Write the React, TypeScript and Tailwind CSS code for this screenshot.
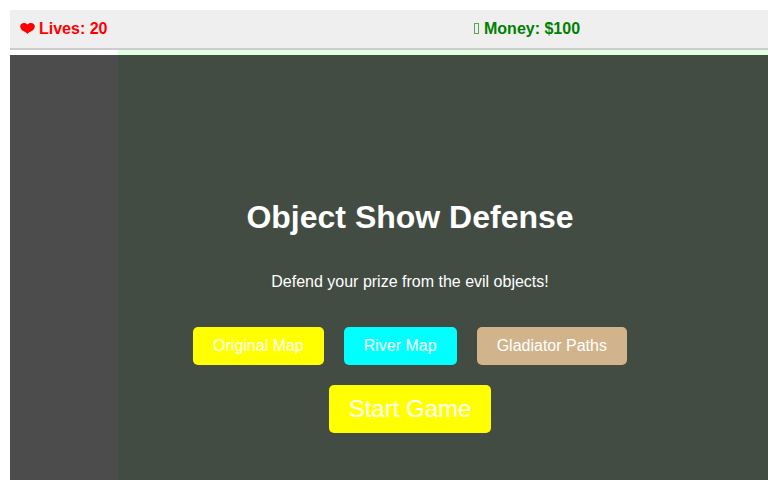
const FONT = 'font-["Liberation_Sans",Arial,sans-serif]';

type MapOption = { id: string; label: string; color: string };

const maps: MapOption[] = [
  { id: "original", label: "Original Map", color: "bg-[#ffff00]" },
  { id: "river", label: "River Map", color: "bg-[#00ffff]" },
  { id: "gladiator", label: "Gladiator Paths", color: "bg-[#d2b48c]" },
];

function HeartIcon() {
  return (
    <svg width="15" height="12" viewBox="0 0 15 12" fill="currentColor" aria-hidden="true">
      <path d="M7.5 1.6C8.200 0.600 9.500 0 11 0c2.300 0 3.800 1.400 3.800 3.400 0 2.100-1.400 3.700-3.600 4.900C9.500 9.200 8.300 9.900 7.500 11 6.700 9.900 5.500 9.200 3.800 8.300 1.600 7.100 0.200 5.500 0.200 3.400 0.200 1.400 1.700 0 4 0c1.500 0 2.800 0.600 3.500 1.600Z" />
    </svg>
  );
}

function CoinIcon() {
  return (
    <svg width="6" height="12" viewBox="0 0 6 12" fill="none" stroke="currentColor" strokeOpacity="0.65" aria-hidden="true">
      <rect x="0.5" y="0.5" width="4" height="10" />
    </svg>
  );
}

function StatusBar() {
  return (
    <header className="grid h-10 shrink-0 grid-cols-[454px_1fr] items-center border-b-2 border-[#cccccc] bg-[#efefef] px-2.5 font-bold leading-[18px]">
      <div className="flex items-center gap-1 text-[#ff0000]">
        <HeartIcon />
        <span>Lives: 20</span>
      </div>
      <div className="flex items-center gap-1 text-[#008000]">
        <CoinIcon />
        <span>Money: $100</span>
      </div>
    </header>
  );
}

function StartScreen() {
  return (
    <section className="flex h-[500px] w-full shrink-0 flex-col items-center justify-center bg-black/70 text-white">
      <h1 className="my-[21px] text-[32px] font-bold leading-[38px]">Object Show Defense</h1>
      <p className="my-4 leading-[18px]">Defend your prize from the evil objects!</p>
      <div className="my-5 flex gap-5">
        {maps.map((map) => (
          <button
            key={map.id}
            type="button"
            className={`cursor-pointer rounded-[5px] px-5 py-2.5 leading-[18px] ${map.color}`}
          >
            {map.label}
          </button>
        ))}
      </div>
      <button
        type="button"
        className="cursor-pointer rounded-[5px] bg-[#ffff00] px-5 py-2.5 text-2xl leading-7"
      >
        Start Game
      </button>
    </section>
  );
}

export default function App() {
  return (
    <div className={`h-screen overflow-hidden bg-white pl-2.5 pt-2.5 text-base ${FONT}`}>
      <div className="flex min-w-[800px] flex-col">
        <StatusBar />
        <main className="flex flex-col bg-linear-to-r from-white from-[108px] to-[#e0ffe0] to-[108px] pt-[5px]">
          <StartScreen />
        </main>
      </div>
    </div>
  );
}
